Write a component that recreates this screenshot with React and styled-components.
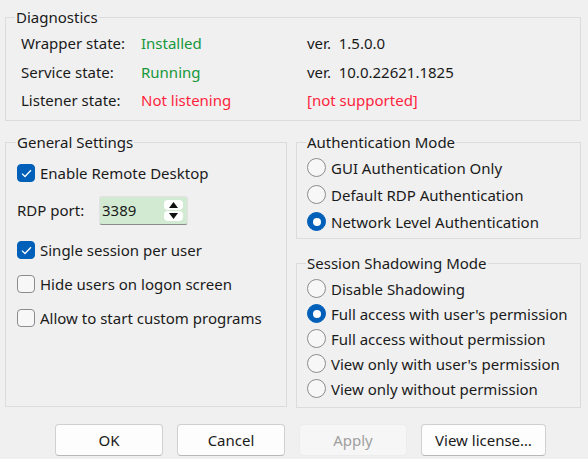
import React from "react";
import styled, { createGlobalStyle } from "styled-components";

const GlobalStyle = createGlobalStyle`
  html, body {
    margin: 0;
    padding: 0;
    background: #f0f0f0;
  }
  body {
    font-family: "Noto Sans", "Segoe UI", sans-serif;
    font-size: 15px;
    color: #1a1a1a;
  }
`;

const Window = styled.div`
  width: 588px;
  height: 459px;
  box-sizing: border-box;
  padding: 8px 7px 0 5px;
  background: #f0f0f0;
  overflow: hidden;
`;

const Group = styled.fieldset`
  margin: 0;
  padding: ${(p) => p.$pad || "0 10px 6px 10px"};
  border: 1px solid #dcdcdc;
  border-radius: 0;
  box-sizing: border-box;
  height: ${(p) => p.$height || "auto"};
  min-width: 0;
`;

const Legend = styled.legend`
  padding: 0 1px;
  margin-left: -1px;
  line-height: 18px;
  color: #1a1a1a;
`;

const DiagGrid = styled.div`
  display: grid;
  grid-template-columns: 120px 166px 1fr;
  grid-auto-rows: 28.5px;
  align-items: center;
  padding: 3px 0 0 5px;
`;

const Cell = styled.span`
  color: ${(p) => p.$color || "#1a1a1a"};
  white-space: pre;
`;

const Columns = styled.div`
  display: grid;
  grid-template-columns: 282px 285px;
  column-gap: 9px;
  margin-top: 12px;
`;

const Stack = styled.div`
  display: flex;
  flex-direction: column;
  gap: ${(p) => p.$gap || "0px"};
`;

const Options = styled.div`
  display: flex;
  flex-direction: column;
  gap: ${(p) => p.$gap || "0px"};
  padding-top: ${(p) => p.$top || "0px"};
`;

const Row = styled.label`
  display: flex;
  align-items: center;
  height: ${(p) => p.$h || "24px"};
  gap: 5px;
  white-space: nowrap;
`;

const Box = styled.span`
  width: 18px;
  height: 18px;
  box-sizing: border-box;
  border-radius: 4px;
  flex: none;
  display: flex;
  align-items: center;
  justify-content: center;
  background: ${(p) => (p.$checked ? "#005fb8" : "#f7f7f7")};
  border: 1px solid ${(p) => (p.$checked ? "#005fb8" : "#8c8c8c")};
`;

const Radio = styled.span`
  width: 19px;
  height: 19px;
  box-sizing: border-box;
  border-radius: 50%;
  flex: none;
  display: flex;
  align-items: center;
  justify-content: center;
  background: ${(p) => (p.$checked ? "#005fb8" : "#f7f7f7")};
  border: 1px solid ${(p) => (p.$checked ? "#005fb8" : "#8c8c8c")};

  &::after {
    content: "";
    display: ${(p) => (p.$checked ? "block" : "none")};
    width: 8px;
    height: 8px;
    border-radius: 50%;
    background: #fff;
  }
`;

const PortRow = styled.div`
  display: flex;
  align-items: center;
  height: 30px;
  margin-bottom: 3px;
`;

const PortLabel = styled.span`
  width: 82px;
  flex: none;
`;

const Spin = styled.div`
  width: 89px;
  height: 29px;
  box-sizing: border-box;
  background: #d1ead1;
  border: 1px solid #e2e2e2;
  border-bottom: 1px solid #8a8a8a;
  border-radius: 3px;
  display: flex;
  align-items: center;
  justify-content: space-between;
  padding: 0 4px 0 2px;
`;

const SpinButtons = styled.div`
  display: flex;
  flex-direction: column;
  gap: 1px;
`;

const SpinButton = styled.span`
  width: 19px;
  height: 10px;
  background: #fff;
  border-radius: 4px;
  display: flex;
  align-items: center;
  justify-content: center;
`;

const ButtonBar = styled.div`
  display: flex;
  gap: 14px;
  padding-left: 50px;
  margin-top: 16px;
`;

const Button = styled.button`
  width: ${(p) => p.$w || "108px"};
  height: 32px;
  box-sizing: border-box;
  font-family: inherit;
  font-size: 15px;
  border-radius: 4px;
  border: 1px solid ${(p) => (p.disabled ? "#ececec" : "#d0d0d0")};
  border-bottom-color: ${(p) => (p.disabled ? "#ececec" : "#b8b8b8")};
  background: ${(p) => (p.disabled ? "#f6f6f6" : "#fdfdfd")};
  color: ${(p) => (p.disabled ? "#a0a0a0" : "#1a1a1a")};
  padding: 0;
`;

const Check = () => (
  <svg width="11" height="9" viewBox="0 0 11 9">
    <path d="M1 4.6 L4 7.5 L10 1.2" fill="none" stroke="#fff" strokeWidth="1.3" />
  </svg>
);

const Arrow = ({ down }) => (
  <svg width="9" height="6" viewBox="0 0 9 6">
    <path d={down ? "M0 0 H9 L4.5 6 Z" : "M0 6 H9 L4.5 0 Z"} fill="#111" />
  </svg>
);

const CheckOption = ({ checked, children }) => (
  <Row>
    <Box $checked={checked}>{checked && <Check />}</Box>
    {children}
  </Row>
);

const RadioOption = ({ checked, h, children }) => (
  <Row $h={h}>
    <Radio $checked={checked} />
    {children}
  </Row>
);

const diagnostics = [
  ["Wrapper state:", "Installed", "#17973a", "ver.  1.5.0.0", "#1a1a1a"],
  ["Service state:", "Running", "#17973a", "ver.  10.0.22621.1825", "#1a1a1a"],
  ["Listener state:", "Not listening", "#ff1f3d", "[not supported]", "#ff1f3d"],
];

const auth = [
  ["GUI Authentication Only", false],
  ["Default RDP Authentication", false],
  ["Network Level Authentication", true],
];

const shadow = [
  ["Disable Shadowing", false],
  ["Full access with user's permission", true],
  ["Full access without permission", false],
  ["View only with user's permission", false],
  ["View only without permission", false],
];

export default function App() {
  return (
    <Window>
      <GlobalStyle />
      <Group $height="113px" $pad="0 10px 0 10px">
        <Legend>Diagnostics</Legend>
        <DiagGrid>
          {diagnostics.map(([label, value, color, ver, verColor]) => (
            <React.Fragment key={label}>
              <Cell>{label}</Cell>
              <Cell $color={color}>{value}</Cell>
              <Cell $color={verColor}>{ver}</Cell>
            </React.Fragment>
          ))}
        </DiagGrid>
      </Group>

      <Columns>
        <Group $height="274px" $pad="0 10px 0 11px">
          <Legend>General Settings</Legend>
          <Options $top="10px" $gap="10px">
            <CheckOption checked>Enable Remote Desktop</CheckOption>
            <PortRow>
              <PortLabel>RDP port:</PortLabel>
              <Spin>
                3389
                <SpinButtons>
                  <SpinButton>
                    <Arrow />
                  </SpinButton>
                  <SpinButton>
                    <Arrow down />
                  </SpinButton>
                </SpinButtons>
              </Spin>
            </PortRow>
            <CheckOption checked>Single session per user</CheckOption>
            <CheckOption>Hide users on logon screen</CheckOption>
            <CheckOption>Allow to start custom programs</CheckOption>
          </Options>
        </Group>

        <Stack $gap="15px">
          <Group $height="106px" $pad="0 10px 0 10px">
            <Legend>Authentication Mode</Legend>
            <Options $top="4px" $gap="2px">
              {auth.map(([label, checked]) => (
                <RadioOption key={label} checked={checked} h="25px">
                  {label}
                </RadioOption>
              ))}
            </Options>
          </Group>
          <Group $height="154px" $pad="0 10px 0 10px">
            <Legend>Session Shadowing Mode</Legend>
            <Options $top="4px">
              {shadow.map(([label, checked]) => (
                <RadioOption key={label} checked={checked} h="25px">
                  {label}
                </RadioOption>
              ))}
            </Options>
          </Group>
        </Stack>
      </Columns>

      <ButtonBar>
        <Button>OK</Button>
        <Button>Cancel</Button>
        <Button disabled>Apply</Button>
        <Button $w="125px">View license…</Button>
      </ButtonBar>
    </Window>
  );
}
